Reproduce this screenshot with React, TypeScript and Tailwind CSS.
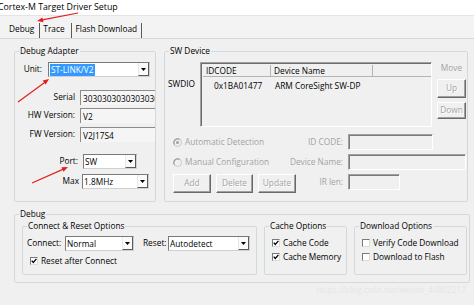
import React from "react";

function Arrow({ d }: { d: string }) {
  return <path d={d} />;
}

function Select({ w, children }: { w: string; children: React.ReactNode }) {
  return (
    <div className={`${w} h-[15px] shrink-0 flex bg-white border border-t-[#7a7a7a] border-l-[#7a7a7a] border-b-[#d0d0d0] border-r-[#d0d0d0]`}>
      <div className="flex-1 min-w-0 flex items-center pl-[1px] overflow-hidden whitespace-nowrap leading-[13px]">{children}</div>
      <div className="w-[11px] h-[13px] flex items-center justify-center border-l border-l-[#e8e8e8] border-r border-b border-r-[#5a5a5a] border-b-[#5a5a5a] bg-[#fafafa]">
        <svg width="5" height="3" viewBox="0 0 5 3">
          <path d="M0 0h5L2.5 3z" fill="#000" />
        </svg>
      </div>
    </div>
  );
}

function ROBox({ children }: { children: React.ReactNode }) {
  return (
    <div className="w-[75px] h-[15px] shrink-0 border-t border-l border-[#8c8c8c] bg-[#f5f5f5] pl-[2px] flex items-center overflow-hidden whitespace-nowrap leading-[13px]">
      {children}
    </div>
  );
}

function Sunken({ w }: { w: string }) {
  return (
    <div className={`${w} h-[16px] border-t border-l border-[#a0a0a0] border-b border-r border-b-white border-r-white shadow-[inset_1px_1px_0_#7a7a7a] bg-[#f0f0f0]`} />
  );
}

function Btn({ w, h, children }: { w: string; h: string; children: React.ReactNode }) {
  return (
    <div className={`${w} ${h} shrink-0 flex items-center justify-center border-t border-l border-white border-b border-r border-b-[#696969] border-r-[#696969] shadow-[inset_-1px_-1px_0_#a0a0a0] text-[#a3a3a3] [text-shadow:1px_1px_0_#ffffff]`}>
      {children}
    </div>
  );
}

function Check({ on }: { on: boolean }) {
  return (
    <div className="w-[8px] h-[8px] shrink-0 bg-white border-t border-l border-[#7a7a7a] border-b border-r border-b-[#dcdcdc] border-r-[#dcdcdc] flex items-center justify-center">
      {on && (
        <svg width="6" height="6" viewBox="0 0 6 6">
          <path d="M0.7 2.6 L2.3 4.4 L5.4 0.8" stroke="#000" strokeWidth="1.3" fill="none" />
        </svg>
      )}
    </div>
  );
}

function Radio({ on }: { on: boolean }) {
  return (
    <svg width="9" height="9" viewBox="0 0 9 9" className="shrink-0">
      <circle cx="4.5" cy="4.5" r="4" fill="#f0f0f0" stroke="#c8c8c8" />
      <path d="M1.2 6.5 A4 4 0 0 1 6.5 1.2" stroke="#8a8a8a" fill="none" />
      {on && <circle cx="4.5" cy="4.5" r="1.5" fill="#a0a0a0" />}
    </svg>
  );
}

export default function App() {
  return (
    <div className="relative w-[474px] h-[305px] overflow-hidden bg-[#f0f0f0] text-black text-[8.3px] font-['Open_Sans','Noto_Sans',sans-serif]">
      {/* title bar */}
      <div className="h-[16px] bg-white border-b border-[#e4e4e4] -ml-[2px] text-[8.8px] leading-[15px] whitespace-nowrap">
        Cortex-M Target Driver Setup
      </div>

      {/* tabs */}
      <div className="h-[23px] flex items-end pl-[5px] border-b border-[#d6d6d6] bg-[#f3f3f3]">
        <div className="h-[15px] pl-[4px] pr-[5px] border-r border-[#5a5a5a] leading-[12px]">Debug</div>
        <div className="h-[15px] px-[3px] pr-[6px] border-r border-[#5a5a5a] leading-[12px]">Trace</div>
        <div className="h-[15px] px-[4px] border-r border-[#5a5a5a] leading-[12px]">Flash Download</div>
      </div>

      {/* row 1 */}
      <div className="flex gap-[8px] pl-[14px] mt-[7px]">
        {/* Debug Adapter */}
        <fieldset className="w-[142px] h-[156px] border border-[#d2d8dc] rounded-[2px]">
          <legend className="ml-[4px] px-[1px] leading-[10px]">Debug Adapter</legend>
          <div className="flex items-center h-[15px] mt-[6px]">
            <div className="w-[27px] text-right">Unit:</div>
            <div className="ml-[6px]">
              <Select w="w-[102px]">
                <span className="bg-[#3399ff] text-white px-[1px] leading-[12px]">ST-LINK/V2</span>
              </Select>
            </div>
          </div>
          <div className="flex items-center h-[15px] mt-[13px]">
            <div className="w-[60px] text-right">Serial</div>
            <div className="ml-[5px]">
              <ROBox>3030303030303030</ROBox>
            </div>
          </div>
          <div className="flex items-center h-[15px] mt-[3px]">
            <div className="w-[60px] text-right">HW Version:</div>
            <div className="ml-[5px]">
              <ROBox>V2</ROBox>
            </div>
          </div>
          <div className="flex items-center h-[15px] mt-[4px]">
            <div className="w-[60px] text-right">FW Version:</div>
            <div className="ml-[5px]">
              <ROBox>V2J17S4</ROBox>
            </div>
          </div>
          <div className="flex items-center h-[15px] mt-[12px]">
            <div className="w-[63px] text-right">Port:</div>
            <div className="ml-[5px]">
              <Select w="w-[54px]">SW</Select>
            </div>
          </div>
          <div className="flex items-center h-[15px] mt-[5px]">
            <div className="w-[64px] text-right">Max</div>
            <div className="ml-[3px]">
              <Select w="w-[67px]">1.8MHz</Select>
            </div>
          </div>
        </fieldset>

        {/* SW Device */}
        <fieldset className="w-[304px] h-[156px] border border-[#d2d8dc] rounded-[2px]">
          <legend className="ml-[4px] px-[1px] leading-[10px]">SW Device</legend>
          <div className="flex h-[65px] mt-[6px]">
            <div className="w-[35px] pl-[3px] pt-[17px] leading-[10px]">SWDIO</div>
            <div className="w-[232px] h-[65px] border-t border-l border-[#a0a0a0] border-b border-r border-b-white border-r-white shadow-[inset_1px_1px_0_#6d6d6d] bg-[#f0f0f0] pl-[2px] pt-[2px]">
              <div className="flex h-[12px] leading-[11px]">
                <div className="w-[68px] pl-[3px] border-r border-b border-[#b4b4b4]">IDCODE</div>
                <div className="w-[102px] pl-[3px] border-r border-b border-[#b4b4b4]">Device Name</div>
                <div className="flex-1 border-b border-[#b4b4b4]" />
              </div>
              <div className="flex mt-[4px] leading-[10px]">
                <div className="w-[68px] pl-[11px]">0x1BA01477</div>
                <div className="pl-[4px]">ARM CoreSight SW-DP</div>
              </div>
            </div>
            <div className="ml-[5px] w-[29px] flex flex-col items-center">
              <div className="mt-[1px] leading-[10px] text-[#a3a3a3]">Move</div>
              <div className="mt-[6px]">
                <Btn w="w-[29px]" h="h-[19px]">Up</Btn>
              </div>
              <div className="mt-[4px]">
                <Btn w="w-[29px]" h="h-[17px]">Down</Btn>
              </div>
            </div>
          </div>

          <div className="mt-[7px] flex flex-col text-[#a3a3a3]">
            <div className="flex h-[16px] items-center">
              <div className="flex-1 flex items-center pl-[8px] gap-[3px]">
                <Radio on={true} />
                <span>Automatic Detection</span>
              </div>
              <div className="mr-[5px]">ID CODE:</div>
              <div className="w-[119px]">
                <Sunken w="w-[85px]" />
              </div>
            </div>
            <div className="flex h-[16px] items-center mt-[4px]">
              <div className="flex-1 flex items-center pl-[8px] gap-[3px]">
                <Radio on={false} />
                <span>Manual Configuration</span>
              </div>
              <div className="mr-[5px]">Device Name:</div>
              <div className="w-[119px]">
                <Sunken w="w-[118px]" />
              </div>
            </div>
            <div className="flex h-[16px] items-start mt-[4px]">
              <div className="flex-1 flex pl-[8px] gap-[5px]">
                <Btn w="w-[38px]" h="h-[19px]">Add</Btn>
                <Btn w="w-[37px]" h="h-[19px]">Delete</Btn>
                <Btn w="w-[38px]" h="h-[19px]">Update</Btn>
              </div>
              <div className="mr-[5px] h-[16px] flex items-center">IR len:</div>
              <div className="w-[119px]">
                <Sunken w="w-[52px]" />
              </div>
            </div>
          </div>
        </fieldset>
      </div>

      {/* Debug group */}
      <fieldset className="ml-[14px] mt-[7px] w-[456px] h-[74px] border border-[#d2d8dc] rounded-[2px]">
        <legend className="ml-[4px] px-[1px] leading-[10px]">Debug</legend>
        <div className="flex gap-[7px] pl-[7px] mt-[2px]">
          <fieldset className="w-[235px] h-[54px] border border-[#d2d8dc] rounded-[2px]">
            <legend className="ml-[4px] px-[1px] leading-[10px]">Connect &amp; Reset Options</legend>
            <div className="flex items-center h-[15px] mt-[5px] pl-[4px]">
              <div className="w-[38px]">Connect:</div>
              <Select w="w-[69px]">Normal</Select>
              <div className="ml-[9px] w-[25px]">Reset:</div>
              <Select w="w-[82px]">Autodetect</Select>
            </div>
            <div className="flex items-center h-[12px] mt-[4px] pl-[7px] gap-[3px]">
              <Check on={true} />
              <span>Reset after Connect</span>
            </div>
          </fieldset>
          <fieldset className="w-[83px] h-[54px] border border-[#d2d8dc] rounded-[2px]">
            <legend className="ml-[4px] px-[1px] leading-[10px]">Cache Options</legend>
            <div className="flex items-center h-[12px] mt-[6px] pl-[7px] gap-[3px]">
              <Check on={true} />
              <span>Cache Code</span>
            </div>
            <div className="flex items-center h-[12px] mt-[2px] pl-[7px] gap-[3px]">
              <Check on={true} />
              <span>Cache Memory</span>
            </div>
          </fieldset>
          <fieldset className="w-[113px] h-[54px] border border-[#d2d8dc] rounded-[2px] overflow-hidden">
            <legend className="ml-[4px] px-[1px] leading-[10px]">Download Options</legend>
            <div className="flex items-center h-[12px] mt-[6px] pl-[7px] gap-[3px] whitespace-nowrap">
              <Check on={false} />
              <span>Verify Code Download</span>
            </div>
            <div className="flex items-center h-[12px] mt-[2px] pl-[7px] gap-[3px] whitespace-nowrap">
              <Check on={false} />
              <span>Download to Flash</span>
            </div>
          </fieldset>
        </div>
      </fieldset>

      <div className="mt-[2px] pr-[8px] text-right text-[#e6e6e6] leading-[10px]">https://blog.csdn.net/weixin_44802217</div>

      {/* red annotation arrows */}
      <svg className="absolute inset-0 pointer-events-none" width="474" height="305" viewBox="0 0 474 305">
        <g stroke="#e41d1d" strokeWidth="1.2" fill="none">
          <line x1="78" y1="13" x2="41" y2="20.2" />
          <line x1="18" y1="102" x2="46" y2="81.4" />
          <line x1="32" y1="183" x2="64.5" y2="168.6" />
        </g>
        <g fill="#e41d1d">
          <Arrow d="M37 21 L42.4 17.4 L43.4 22.3 Z" />
          <Arrow d="M49 79 L45.7 84.6 L42.7 80.6 Z" />
          <Arrow d="M68 167 L63.5 171.7 L61.5 167.2 Z" />
        </g>
      </svg>
    </div>
  );
}
